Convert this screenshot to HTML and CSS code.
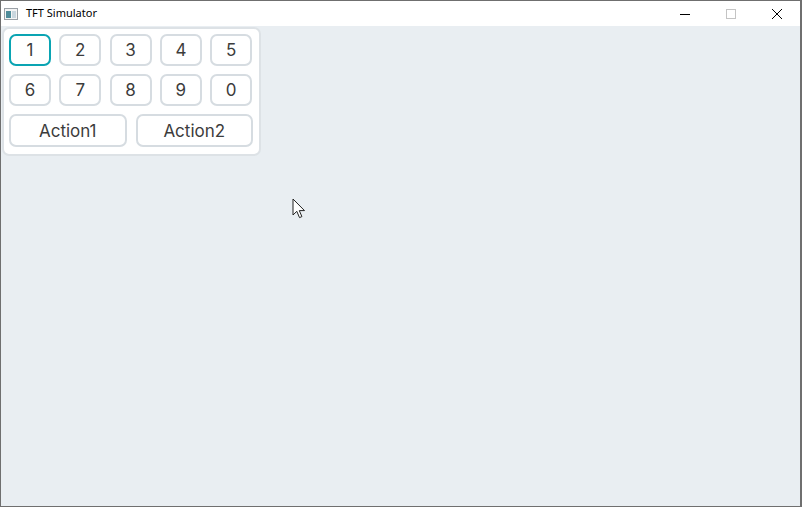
FILE: index.html
```html
<!DOCTYPE html>
<html>
<head>
<meta charset="utf-8">
<link rel="stylesheet" href="styles.css">
</head>
<body>
<div class="window">
  <div class="titlebar">
    <div class="app-icon"><svg width="14" height="12" viewBox="0 0 14 12"><rect x="0.5" y="0.5" width="13" height="11" fill="#f4f4f4" stroke="#9aa0a6"/><rect x="2" y="3" width="5" height="7" fill="#4f8c9a"/><rect x="8" y="3" width="4" height="7" fill="#c9d6de"/></svg></div>
    <div class="title">TFT Simulator</div>
    <div class="controls">
      <div class="ctl"><svg width="12" height="12" viewBox="0 0 12 12"><path d="M1 6.5H11" stroke="#000" stroke-width="1"/></svg></div>
      <div class="ctl"><svg width="12" height="12" viewBox="0 0 12 12"><rect x="1.5" y="1.5" width="9" height="9" fill="none" stroke="#c4c4c4"/></svg></div>
      <div class="ctl"><svg width="12" height="12" viewBox="0 0 12 12"><path d="M1 1L11 11M11 1L1 11" stroke="#000" stroke-width="1"/></svg></div>
    </div>
  </div>
  <div class="screen">
    <div class="panel">
      <div class="row">
        <div class="btn focused">1</div>
        <div class="btn">2</div>
        <div class="btn">3</div>
        <div class="btn">4</div>
        <div class="btn">5</div>
      </div>
      <div class="row">
        <div class="btn">6</div>
        <div class="btn">7</div>
        <div class="btn">8</div>
        <div class="btn">9</div>
        <div class="btn">0</div>
      </div>
      <div class="row actions">
        <div class="btn wide">Action1</div>
        <div class="btn wide">Action2</div>
      </div>
    </div>
    <svg class="cursor" width="14" height="22" viewBox="0 0 14 22"><path d="M1 1V17L4.8 13.3L7.5 19.6L9.9 18.6L7.3 12.6H12.5Z" fill="#fff" stroke="#222" stroke-width="1" stroke-linejoin="round"/></svg>
  </div>
</div>
</body>
</html>
```
FILE: styles.css
```css
html, body {
  margin: 0;
  padding: 0;
  width: 802px;
  height: 507px;
  overflow: hidden;
  background: #fff;
}
.window {
  box-sizing: border-box;
  width: 802px;
  height: 507px;
  border: 1px solid #6f6f6f;
  border-right-width: 2px;
  display: flex;
  flex-direction: column;
}
.titlebar {
  height: 25px;
  background: #fff;
  display: flex;
  align-items: center;
  font-family: "Noto Sans", "Liberation Sans", sans-serif;
  font-size: 11px;
  color: #000;
}
.app-icon {
  width: 14px;
  height: 12px;
  margin-left: 3px;
  display: flex;
}
.title {
  margin-left: 8px;
  line-height: 25px;
  position: relative;
  top: -1px;
}
.controls {
  margin-left: auto;
  display: flex;
  height: 25px;
}
.ctl {
  width: 46px;
  height: 25px;
  display: flex;
  align-items: center;
  justify-content: center;
}
.screen {
  flex: 1;
  background: #e9eef2;
  position: relative;
  padding: 1px 0 0 1px;
}
.panel {
  box-sizing: border-box;
  width: 259px;
  background: #fff;
  border: 2px solid #dde2e6;
  border-radius: 7px;
  padding: 5px 6px 7px 5px;
  display: flex;
  flex-direction: column;
  gap: 8px;
}
.row {
  display: flex;
  gap: 8.3px;
}
.btn {
  box-sizing: border-box;
  width: 42px;
  height: 32px;
  border: 2px solid #d6dce1;
  border-radius: 7px;
  display: flex;
  align-items: center;
  justify-content: center;
  font-family: "Inter", "Lato", sans-serif;
  font-size: 17px;
  color: #3c3c3c;
  background: #fff;
}
.btn.focused {
  border-color: #0aa4b3;
}
.row.actions {
  gap: 9px;
}
.btn.wide {
  width: 117.5px;
  height: 33px;
}
.cursor {
  position: absolute;
  left: 291px;
  top: 172px;
}
```
